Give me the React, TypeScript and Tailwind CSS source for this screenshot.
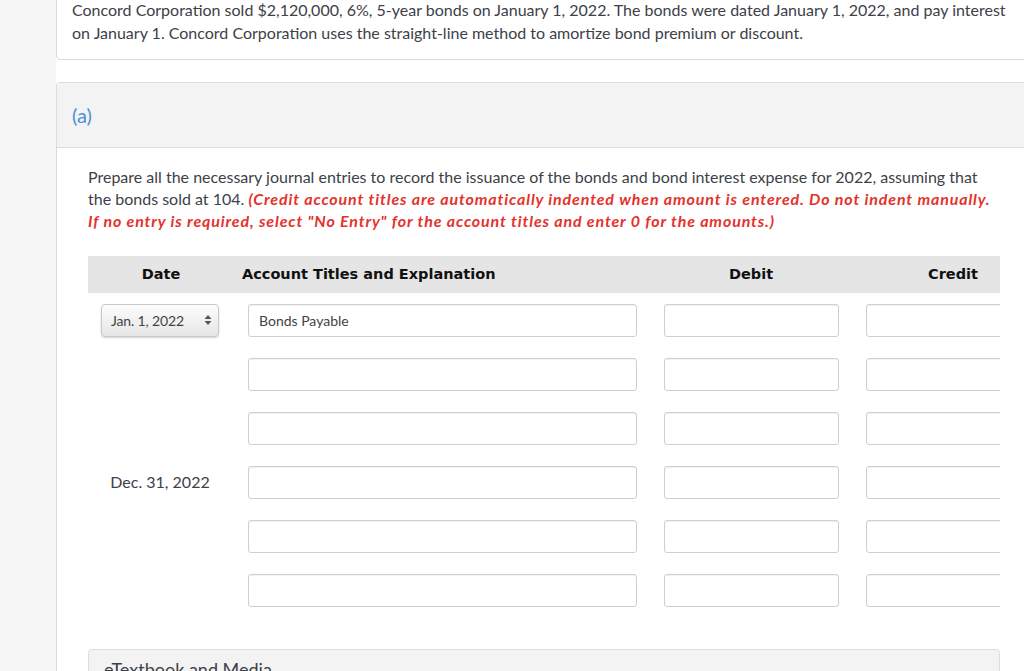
import React from "react";

const lato = { fontFamily: "Lato, 'Noto Sans', sans-serif" };

function Input({ w, children }: { w: string; children?: React.ReactNode }) {
  return (
    <div
      className={`${w} h-[33px] shrink-0 rounded-[3px] border border-[#cfcfcf] bg-white px-[10px] flex items-center text-[14px] text-[#444] shadow-[inset_0_1px_1px_rgba(0,0,0,0.06)]`}
    >
      {children}
    </div>
  );
}

function Row({ date, select, account }: { date?: string; select?: boolean; account?: string }) {
  return (
    <div className="flex h-[54px] items-center">
      <div className="w-[146px] shrink-0 flex items-center">
        {select ? (
          <div className="ml-[13px] w-[118px] h-[33px] rounded-[4px] border border-[#c9c9c9] bg-gradient-to-b from-[#fdfdfd] to-[#e6e6e6] shadow-[0_1px_2px_rgba(0,0,0,0.18)] flex items-center justify-between pl-[9px] pr-[6px] text-[14px] tracking-[-0.15px] text-[#444]">
            <span>Jan. 1, 2022</span>
            <svg width="8" height="12" viewBox="0 0 8 12">
              <path d="M4 1 L7.5 5 L0.5 5 Z" fill="#555" />
              <path d="M4 11 L7.5 7 L0.5 7 Z" fill="#555" />
            </svg>
          </div>
        ) : date ? (
          <div className="w-full text-center text-[16px] text-[#3d4148] pr-[2px]">{date}</div>
        ) : null}
      </div>
      <div className="w-[416px] shrink-0 pl-[14px] pr-[13px]">
        <Input w="w-[389px]">{account}</Input>
      </div>
      <div className="w-[202px] shrink-0 pl-[14px] pr-[13px]">
        <Input w="w-[175px]" />
      </div>
      <div className="w-[202px] shrink-0 pl-[14px] pr-[13px]">
        <Input w="w-[175px]" />
      </div>
    </div>
  );
}

export default function App() {
  return (
    <div className="w-[1024px] h-[671px] overflow-hidden flex bg-white" style={lato}>
      <div className="w-[56px] shrink-0 bg-[#f7f7f7]" />
      <div className="w-[975px] shrink-0 text-[#3d4148]">
        <div className="mt-[-15px] rounded-[4px] border border-[#dcdcdc] bg-white pl-[15px] pr-[10px] pt-[12px] pb-[15px] text-[16px] leading-[23px]">
          Concord Corporation sold $2,120,000, 6%, 5-year bonds on January 1, 2022. The bonds were dated January 1, 2022, and pay interest
          <br />
          on January 1. Concord Corporation uses the straight-line method to amortize bond premium or discount.
        </div>
        <div className="mt-[22px] rounded-t-[4px] border border-b-0 border-[#dcdcdc]">
          <div className="h-[65px] bg-[#f3f3f3] border-b border-[#dcdcdc] flex items-center pl-[15px] pb-[1px]">
            <span className="text-[20px] font-normal text-[#4a90d9]">(a)</span>
          </div>
          <div className="pl-[31px] pt-[18px] bg-white">
            <div className="w-[912px]">
              <div className="text-[16px] leading-[22px]">
                Prepare all the necessary journal entries to record the issuance of the bonds and bond interest expense for 2022, assuming that
                <br />
                the bonds sold at 104.{" "}
                <span className="font-bold italic text-[#e5322c] tracking-[0.86px]">
                  (Credit account titles are automatically indented when amount is entered. Do not indent manually.
                  <br />
                  If no entry is required, select "No Entry" for the account titles and enter 0 for the amounts.)
                </span>
              </div>
              <div className="mt-[24px] w-[912px] overflow-hidden">
                <div className="w-[966px]">
                  <div
                    className="flex h-[37px] items-center bg-[#e5e5e5] text-[14.5px] font-bold text-[#111] pt-[1px]"
                    style={{ fontFamily: "'DejaVu Sans', Verdana, sans-serif" }}
                  >
                    <div className="w-[146px] shrink-0 text-center">Date</div>
                    <div className="w-[416px] shrink-0 pl-[8px]">Account Titles and Explanation</div>
                    <div className="w-[202px] shrink-0 text-center">Debit</div>
                    <div className="w-[202px] shrink-0 text-center">Credit</div>
                  </div>
                  <Row select account="Bonds Payable" />
                  <Row />
                  <Row />
                  <Row date="Dec. 31, 2022" />
                  <Row />
                  <Row />
                </div>
              </div>
              <div className="mt-[32px] rounded-t-[4px] border border-[#dcdcdc] bg-[#f3f3f3] h-[40px] pl-[15px] pt-[6px] text-[18px] text-[#3d4148]">
                eTextbook and Media
              </div>
            </div>
          </div>
        </div>
      </div>
    </div>
  );
}
